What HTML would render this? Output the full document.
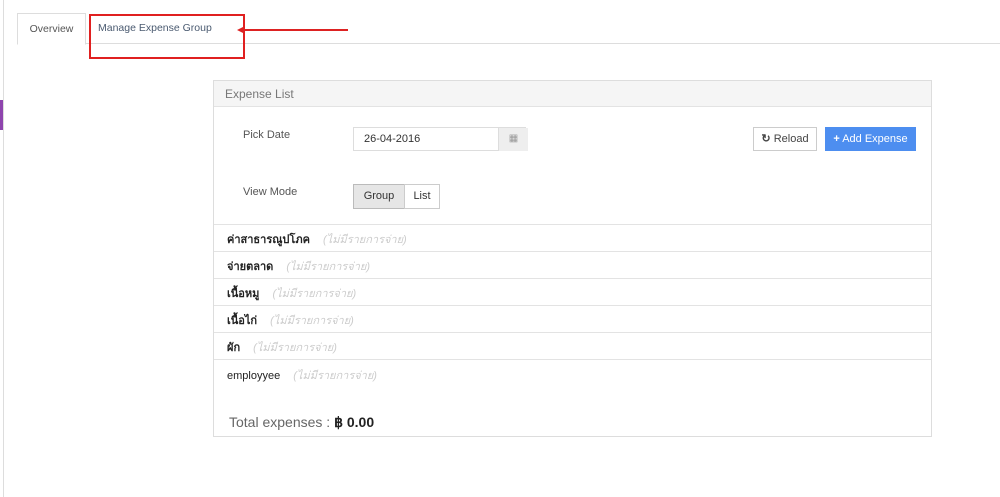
<!DOCTYPE html><html><head><style>
body{margin:0;width:1000px;height:497px;background:#fff;font-family:"Liberation Sans",sans-serif;position:relative;overflow:hidden;color:#333}
.a{position:absolute}
</style></head><body>
<div class="a" style="left:3px;top:0;width:1px;height:497px;background:#ddd"></div>
<div class="a" style="left:0;top:100px;width:3px;height:30px;background:#8e44ad"></div>
<div class="a" style="left:17px;top:43px;width:983px;height:1px;background:#ddd"></div>
<div class="a" style="left:17px;top:13px;width:67px;height:30px;border:1px solid #ddd;border-bottom:1px solid #fff;background:#fff;font-size:10.5px;color:#555;line-height:30px;text-align:center">Overview</div>
<div class="a" style="left:98px;top:22px;font-size:10.5px;color:#4a5a70">Manage Expense Group</div>
<div class="a" style="left:89px;top:14px;width:152px;height:41px;border:2px solid #e02020"></div>
<div class="a" style="left:244px;top:29px;width:104px;height:2px;background:#d22"></div>
<div class="a" style="left:237px;top:26px;width:0;height:0;border-top:4px solid transparent;border-bottom:4px solid transparent;border-right:8px solid #d22"></div>
<div class="a" style="left:213px;top:80px;width:717px;height:355px;border:1px solid #ddd"></div>
<div class="a" style="left:214px;top:81px;width:717px;height:26px;background:#f5f5f5;border-bottom:1px solid #e3e3e3;font-size:12px;color:#777;line-height:27px;padding-left:11px;box-sizing:border-box">Expense List</div>
<div class="a" style="left:243px;top:129px;font-size:11px;color:#555">Pick Date</div>
<div class="a" style="left:353px;top:127px;width:173px;height:24px;border:1px solid #ddd;font-size:11px;line-height:23px;padding-left:10px;box-sizing:border-box;color:#333">26-04-2016</div>
<div class="a" style="left:498px;top:128px;width:29px;height:23px;background:#eee;border-left:1px solid #ddd;font-size:10px;color:#999;text-align:center;line-height:22px">▦</div>
<div class="a" style="left:753px;top:127px;width:64px;height:24px;border:1px solid #ccc;box-sizing:border-box;font-size:11px;line-height:22px;text-align:center;color:#444"><b>↻</b> Reload</div>
<div class="a" style="left:825px;top:127px;width:91px;height:24px;background:#4d8ef0;color:#fff;font-size:11px;line-height:24px;text-align:center"><b>+</b> Add Expense</div>
<div class="a" style="left:243px;top:186px;font-size:11px;color:#555">View Mode</div>
<div class="a" style="left:353px;top:184px;width:52px;height:25px;background:#e6e6e6;border:1px solid #bbb;box-sizing:border-box;font-size:11px;line-height:23px;text-align:center">Group</div>
<div class="a" style="left:404px;top:184px;width:36px;height:25px;border:1px solid #ccc;box-sizing:border-box;font-size:11px;line-height:23px;text-align:center">List</div>
<div class="a" style="left:214px;top:224px;width:717px;height:1px;background:#e3e3e3"></div>
<div class="a" style="left:214px;top:251px;width:717px;height:1px;background:#e3e3e3"></div>
<div class="a" style="left:214px;top:278px;width:717px;height:1px;background:#e3e3e3"></div>
<div class="a" style="left:214px;top:305px;width:717px;height:1px;background:#e3e3e3"></div>
<div class="a" style="left:214px;top:332px;width:717px;height:1px;background:#e3e3e3"></div>
<div class="a" style="left:214px;top:359px;width:717px;height:1px;background:#e3e3e3"></div>
<div class="a" style="left:227px;top:230px;font-size:11px;font-weight:bold;color:#222">ค่าสาธารณูปโภค <i style="font-weight:normal;color:#ccc;margin-left:10px">(ไม่มีรายการจ่าย)</i></div>
<div class="a" style="left:227px;top:257px;font-size:11px;font-weight:bold;color:#222">จ่ายตลาด <i style="font-weight:normal;color:#ccc;margin-left:10px">(ไม่มีรายการจ่าย)</i></div>
<div class="a" style="left:227px;top:284px;font-size:11px;font-weight:bold;color:#222">เนื้อหมู <i style="font-weight:normal;color:#ccc;margin-left:10px">(ไม่มีรายการจ่าย)</i></div>
<div class="a" style="left:227px;top:311px;font-size:11px;font-weight:bold;color:#222">เนื้อไก่ <i style="font-weight:normal;color:#ccc;margin-left:10px">(ไม่มีรายการจ่าย)</i></div>
<div class="a" style="left:227px;top:338px;font-size:11px;font-weight:bold;color:#222">ผัก <i style="font-weight:normal;color:#ccc;margin-left:10px">(ไม่มีรายการจ่าย)</i></div>
<div class="a" style="left:227px;top:366px;font-size:11px;color:#222">employyee <i style="color:#ccc;margin-left:10px">(ไม่มีรายการจ่าย)</i></div>
<div class="a" style="left:229px;top:414px;font-size:14px;color:#666">Total expenses : <b style="color:#222">฿ 0.00</b></div>
</body></html>
